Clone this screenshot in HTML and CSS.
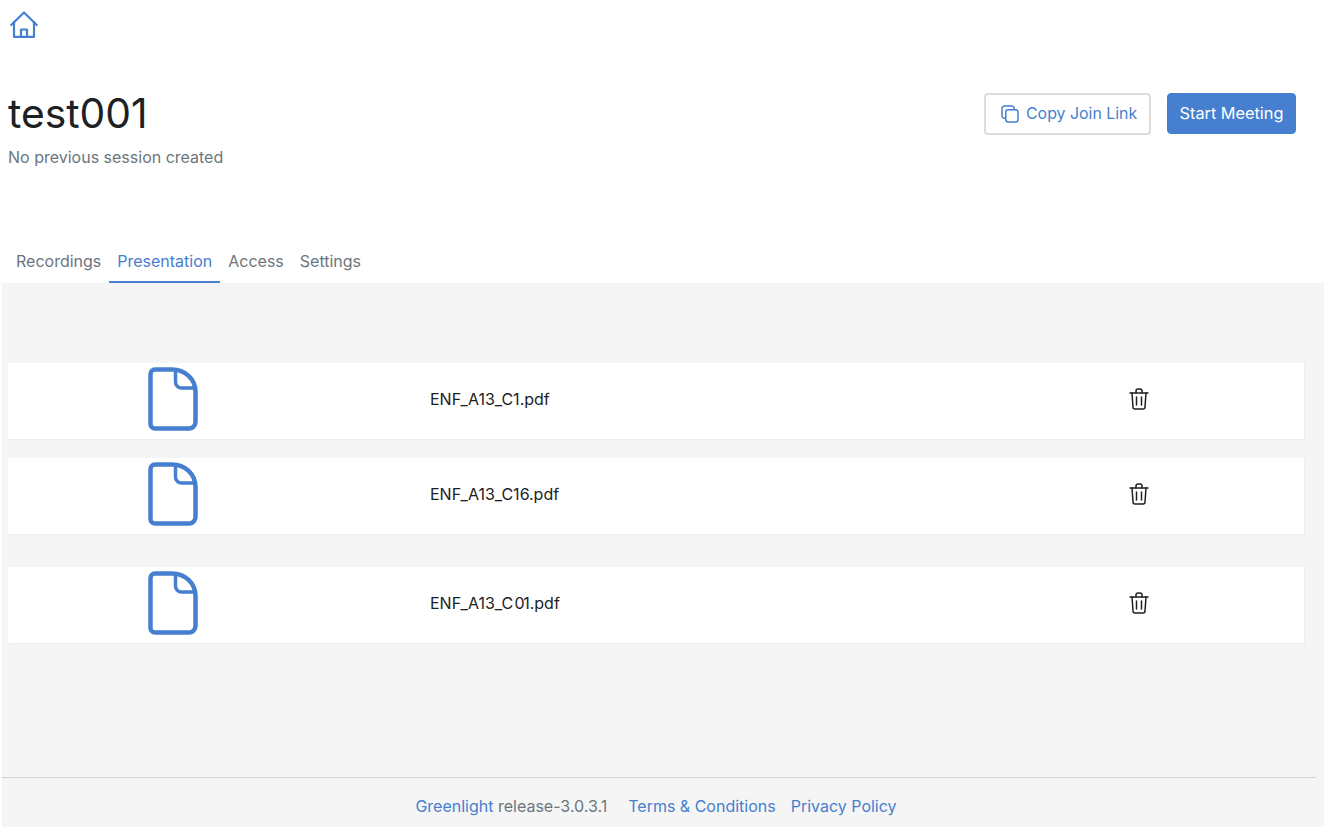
FILE: index.html
```html
<!DOCTYPE html>
<html lang="en">
<head>
<meta charset="utf-8">
<title>test001</title>
<link rel="stylesheet" href="styles.css">
</head>
<body>
<header class="top">
  <a class="home" href="#" aria-label="Home">
    <svg width="28" height="28" viewBox="0 0 28 28" fill="none" stroke="#467fcf" stroke-width="2.200" stroke-linecap="round" stroke-linejoin="round"><path d="M1.200 14 14 1.500 26.800 14"/><path d="M4 11V25.800H24V11"/><path d="M11 25.800V18.500H17V25.800"/></svg>
  </a>
  <div class="room-head">
    <div>
      <h1 class="room-title">test001</h1>
      <p class="room-sub">No previous session created</p>
    </div>
    <div class="room-actions">
      <button class="btn btn-outline">
        <svg width="18" height="18" viewBox="0 0 18 18" fill="none" stroke="#467fcf" stroke-width="1.500" stroke-linejoin="round"><path d="M4.500 13.200H3.500A2.500 2.500 0 0 1 1 10.700V3.500A2.500 2.500 0 0 1 3.500 1H10.700A2.500 2.500 0 0 1 13.200 3.500V4.500"/><rect x="4.800" y="4.800" width="12.200" height="12.200" rx="2.500"/></svg>
        <span>Copy Join Link</span>
      </button>
      <button class="btn btn-primary">Start Meeting</button>
    </div>
  </div>
  <nav class="tabs">
    <a class="tab" href="#">Recordings</a>
    <a class="tab active" href="#">Presentation</a>
    <a class="tab" href="#">Access</a>
    <a class="tab" href="#">Settings</a>
  </nav>
</header>
<main class="panel">
  <div class="files">
    <div class="file-row">
      <div class="file-icon"><svg width="50" height="64" viewBox="0 0 50 64" fill="none" stroke="#467fcf" stroke-linejoin="round" stroke-linecap="round"><path stroke-width="4.500" d="M7 2.500H24C37 2.500 47.500 12 47.500 25V55A6.500 6.500 0 0 1 41 61.500H7A4.500 4.500 0 0 1 2.500 57V7A4.500 4.500 0 0 1 7 2.500Z"/><path stroke-width="3.500" d="M27.500 4V15A6 6 0 0 0 33.500 21H46.500"/></svg></div>
      <div class="file-name">ENF_A13_C1.pdf</div>
      <div class="file-del"><svg width="20" height="22" viewBox="0 0 20 22" fill="none" stroke="#1d2124" stroke-width="1.500" stroke-linecap="round" stroke-linejoin="round"><path d="M1 5H19"/><path d="M7 5V3A2 2 0 0 1 9 1H11A2 2 0 0 1 13 3V5"/><path d="M3 5 4 19A2 2 0 0 0 6 21H14A2 2 0 0 0 16 19L17 5"/><path d="M7.500 9V17M12.500 9V17"/></svg></div>
    </div>
    <div class="file-row">
      <div class="file-icon"><svg width="50" height="64" viewBox="0 0 50 64" fill="none" stroke="#467fcf" stroke-linejoin="round" stroke-linecap="round"><path stroke-width="4.500" d="M7 2.500H24C37 2.500 47.500 12 47.500 25V55A6.500 6.500 0 0 1 41 61.500H7A4.500 4.500 0 0 1 2.500 57V7A4.500 4.500 0 0 1 7 2.500Z"/><path stroke-width="3.500" d="M27.500 4V15A6 6 0 0 0 33.500 21H46.500"/></svg></div>
      <div class="file-name">ENF_A13_C16.pdf</div>
      <div class="file-del"><svg width="20" height="22" viewBox="0 0 20 22" fill="none" stroke="#1d2124" stroke-width="1.500" stroke-linecap="round" stroke-linejoin="round"><path d="M1 5H19"/><path d="M7 5V3A2 2 0 0 1 9 1H11A2 2 0 0 1 13 3V5"/><path d="M3 5 4 19A2 2 0 0 0 6 21H14A2 2 0 0 0 16 19L17 5"/><path d="M7.500 9V17M12.500 9V17"/></svg></div>
    </div>
    <div class="file-row file-row-spaced">
      <div class="file-icon"><svg width="50" height="64" viewBox="0 0 50 64" fill="none" stroke="#467fcf" stroke-linejoin="round" stroke-linecap="round"><path stroke-width="4.500" d="M7 2.500H24C37 2.500 47.500 12 47.500 25V55A6.500 6.500 0 0 1 41 61.500H7A4.500 4.500 0 0 1 2.500 57V7A4.500 4.500 0 0 1 7 2.500Z"/><path stroke-width="3.500" d="M27.500 4V15A6 6 0 0 0 33.500 21H46.500"/></svg></div>
      <div class="file-name">ENF_A13_C&#8202;<span class="tight">0</span>1.pdf</div>
      <div class="file-del"><svg width="20" height="22" viewBox="0 0 20 22" fill="none" stroke="#1d2124" stroke-width="1.500" stroke-linecap="round" stroke-linejoin="round"><path d="M1 5H19"/><path d="M7 5V3A2 2 0 0 1 9 1H11A2 2 0 0 1 13 3V5"/><path d="M3 5 4 19A2 2 0 0 0 6 21H14A2 2 0 0 0 16 19L17 5"/><path d="M7.500 9V17M12.500 9V17"/></svg></div>
    </div>
  </div>
  <footer class="foot">
    <a href="#">Greenlight</a><span class="rel"> release-3.0.3.1</span>
    <a class="foot-link foot-terms" href="#">Terms &amp; Conditions</a>
    <a class="foot-link" href="#">Privacy Policy</a>
  </footer>
</main>
</body>
</html>
```
FILE: styles.css
```css
* { box-sizing: border-box; }
html, body { margin: 0; height: 100%; }
body {
  background: #fff;
  color: #212529;
  font-family: Inter, "Liberation Sans", sans-serif;
  font-size: 16px;
  line-height: 24px;
  overflow: hidden;
}
a { color: #467fcf; text-decoration: none; }
.top { padding: 11px 0 0 8px; }
.home { display: block; width: 28px; height: 28px; margin-left: 2px; }
.home svg { display: block; }
.room-head {
  display: flex;
  justify-content: space-between;
  align-items: flex-start;
  margin-top: 51px;
  padding-right: 30px;
}
.room-title {
  margin: 0;
  font-size: 40.8px;
  line-height: 46px;
  font-weight: 400;
  color: #1d2124;
}
.room-sub { margin: 9px 0 0; color: #6c757d; }
.room-actions { display: flex; gap: 16px; padding-top: 3px; }
.btn {
  display: flex;
  align-items: center;
  gap: 7px;
  font: inherit;
  white-space: nowrap;
  height: 41px;
  border-radius: 4px;
}
.btn-outline {
  color: #467fcf;
  background: #fff;
  border: 2px solid #dcdcdc;
  padding: 0 0 0 15px;
  width: 167px;
  height: 42px;
  font-size: 15.9px;
}
.btn-primary {
  color: #fff;
  background: #467fcf;
  border: 1px solid #467fcf;
  width: 129px;
  justify-content: center;
  padding: 0 0 2px;
  font-size: 16.3px;
}
.tabs { display: flex; margin-top: 72px; }
.tab {
  display: block;
  padding: 0 8px;
  height: 42px;
  line-height: 41px;
  color: #6c757d;
}
.tab.active { color: #467fcf; border-bottom: 2px solid #467fcf; }
.panel {
  margin: 0 2px;
  height: 544px;
  background: #f5f5f5;
  padding-top: 80px;
  display: flex;
  flex-direction: column;
}
.files { display: flex; flex-direction: column; gap: 19px; flex: 1; padding: 0 20px 0 6px; }
.file-row {
  display: flex;
  align-items: center;
  height: 76px;
  padding-bottom: 5px;
  background: #fff;
  box-shadow: 1px 1px 1px rgba(0, 0, 0, .03);
}
.file-row-spaced { margin-top: 14px; }
.file-icon { width: 422px; padding-left: 140px; line-height: 0; }
.file-name { width: 699px; color: #1d2124; }
.tight { letter-spacing: -1.5px; }
.file-del { line-height: 0; }
.foot {
  margin-right: 8px;
  height: 50px;
  border-top: 1px solid #ced4da;
  display: flex;
  justify-content: center;
  align-items: center;
  white-space: pre;
  padding: 6px 6px 0 0;
}
.rel { color: #6c757d; }
.foot-link { margin-left: 15px; }
.foot-terms { margin-left: 21px; }
```
